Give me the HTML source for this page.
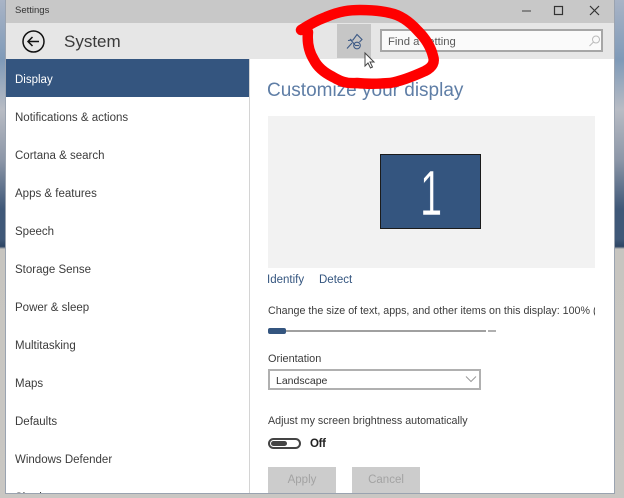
<!DOCTYPE html>
<html><head><meta charset="utf-8"><style>
html,body{margin:0;padding:0}
body{width:624px;height:498px;overflow:hidden;position:relative;font-family:"Liberation Sans",sans-serif;background:#c9c7c3}
.a{position:absolute;white-space:nowrap}
.n{left:15px;font-size:11.5px;color:#3c3c3c;line-height:14px}
</style></head><body>
<div class="a" style="left:0;top:0;width:624px;height:498px;background:linear-gradient(180deg,#a9b4c6 0,#7f9ab8 12%,#b8bcc4 22%,#8d97a8 32%,#3f5878 42%,#3f5878 48%,#2c4463 49.5%,#c7c5c0 50%,#c9c7c3 100%)"></div>
<div class="a" style="left:5px;top:0;width:610px;height:494px;background:#9aa3b0"></div>
<div class="a" style="left:6px;top:0;width:608px;height:493px;background:#fff;overflow:hidden">
<div class="a" style="left:0;top:0;width:608px;height:23px;background:#c8c8c8"></div>
<div class="a" style="left:0;top:23px;width:608px;height:36px;background:#e6e6e6"></div>
<div class="a" style="left:0;top:59px;width:243px;height:38px;background:#34557f"></div>
<div class="a" style="left:243px;top:59px;width:1px;height:434px;background:#d4d4d4"></div>
</div>
<div class="a" style="left:15px;top:5px;font-size:9.5px;color:#333;line-height:12px">Settings</div>
<svg class="a" style="left:0;top:0" width="624" height="498" fill="none">
<circle cx="33.5" cy="41.5" r="10.5" stroke="#111" stroke-width="1.5"/>
<path d="M39 41.5H28.5M32.5 37l-4.5 4.500 4.500 4.500" stroke="#111" stroke-width="1.5"/>
<path d="M522 11h9" stroke="#666" stroke-width="1.400"/>
<rect x="554.500" y="6.500" width="8" height="8" stroke="#333" stroke-width="1.200"/>
<path d="M590 6l9 9M599 6l-9 9" stroke="#333" stroke-width="1.200"/>
</svg>
<div class="a" style="left:64px;top:31px;font-size:17px;color:#3a3a3a;line-height:22px">System</div>
<div class="a" style="left:337px;top:24px;width:34px;height:34px;background:#c6c6c6"></div>
<svg class="a" style="left:337px;top:24px" width="34" height="34" fill="none" stroke="#3d5a86" stroke-width="1.100">
<path d="M10 24.500l5-5.500M11 16.500l5-.5 4-5.500 5 5-2.500 2.500M13 15l5 6"/>
<circle cx="20" cy="21.500" r="3.300"/><path d="M18 21.500h4"/>
</svg>
<div class="a" style="left:380px;top:29px;width:219px;height:19px;border:2px solid #a6a6a6;background:#fafafa"></div>
<div class="a" style="left:388px;top:35px;font-size:11.300px;color:#5a5a5a;line-height:14px">Find a setting</div>
<svg class="a" style="left:588px;top:34px" width="14" height="14" fill="none" stroke="#bbb" stroke-width="1"><circle cx="8" cy="5.500" r="3.500"/><path d="M5.500 8L1.500 12"/></svg>
<div class="a n" style="top:73px;color:#fff">Display</div>
<div class="a n" style="top:111px">Notifications &amp; actions</div>
<div class="a n" style="top:149px">Cortana &amp; search</div>
<div class="a n" style="top:187px">Apps &amp; features</div>
<div class="a n" style="top:225px">Speech</div>
<div class="a n" style="top:263px">Storage Sense</div>
<div class="a n" style="top:301px">Power &amp; sleep</div>
<div class="a n" style="top:339px">Multitasking</div>
<div class="a n" style="top:377px">Maps</div>
<div class="a n" style="top:415px">Defaults</div>
<div class="a n" style="top:453px">Windows Defender</div>
<div class="a" style="left:6px;top:490px;width:243px;height:3px;overflow:hidden"><div class="a n" style="left:9px;top:1px">Sharing</div></div>
<div class="a" style="left:267px;top:79px;font-size:19px;color:#5f7ea6;line-height:24px">Customize your display</div>
<div class="a" style="left:268px;top:116px;width:327px;height:152px;background:#f2f2f2"></div>
<div class="a" style="left:380px;top:154px;width:99px;height:73px;border:1.500px solid #1b1b1b;background:#34557f"></div>
<div class="a" style="left:380px;top:153px;width:102px;height:80px;text-align:center;font-size:64px;line-height:80px;color:#fff;transform:scaleX(.62);-webkit-text-stroke:.5px #34557f">1</div>
<div class="a" style="left:267px;top:273px;font-size:11.500px;color:#34557f;line-height:14px">Identify</div>
<div class="a" style="left:319px;top:273px;font-size:11.500px;color:#34557f;line-height:14px">Detect</div>
<div class="a" style="left:268px;top:304px;width:327px;overflow:hidden;font-size:10.700px;color:#3c3c3c;line-height:14px">Change the size of text, apps, and other items on this display: 100% (Recommended)</div>
<div class="a" style="left:268px;top:330px;width:218px;height:2px;background:#a0a0a0"></div>
<div class="a" style="left:488px;top:330px;width:8px;height:2px;background:#b0b0b0"></div>
<div class="a" style="left:268px;top:328px;width:18px;height:6px;border-radius:2px;background:#34557f"></div>
<div class="a" style="left:268px;top:352px;font-size:10.900px;color:#3c3c3c;line-height:14px">Orientation</div>
<div class="a" style="left:268px;top:369px;width:209px;height:17px;border:2px solid #b0b0b0;background:#fff"></div>
<div class="a" style="left:276px;top:374px;font-size:10.500px;color:#333;line-height:14px">Landscape</div>
<svg class="a" style="left:465px;top:375px" width="12" height="9" fill="none" stroke="#999" stroke-width="1"><path d="M1 1.500l5 5 5-5"/></svg>
<div class="a" style="left:268px;top:414px;font-size:10.700px;color:#3c3c3c;line-height:14px">Adjust my screen brightness automatically</div>
<div class="a" style="left:268px;top:438px;width:29px;height:7px;border:2px solid #444;border-radius:7px;background:#fff"></div>
<div class="a" style="left:271px;top:441px;width:16px;height:5px;border-radius:3px;background:#444"></div>
<div class="a" style="left:310px;top:437px;font-size:11.500px;color:#222;line-height:14px;font-weight:bold;letter-spacing:-.3px">Off</div>
<div class="a" style="left:268px;top:467px;width:68px;height:26px;background:#cccccc;color:#a3a3a3;font-size:11.500px;line-height:26px;text-align:center">Apply</div>
<div class="a" style="left:352px;top:467px;width:68px;height:26px;background:#cccccc;color:#a3a3a3;font-size:11.500px;line-height:26px;text-align:center">Cancel</div>
<svg class="a" style="left:0;top:0" width="624" height="498" fill="none">
<path d="M301 30C310 24 318 20 326 17C340 11 350 10 360 10C372 10 382 11 390 13C400 15 410 22 418 31C426 39 431 48 433 56C435 62 433 67 425 71C414 76 402 81 390 83C376 84 366 84 357 83C346 84 340 81 333 77C325 73 318 68 314 60C309 52 307 42 308 32" stroke="#f00" stroke-width="10.500" stroke-linecap="round" stroke-linejoin="round"/>
<path d="M365 53v13l3-3 2.500 5 2-1-2.500-5h4z" fill="#fff" stroke="#444" stroke-width="1"/>
</svg>
</body></html>
